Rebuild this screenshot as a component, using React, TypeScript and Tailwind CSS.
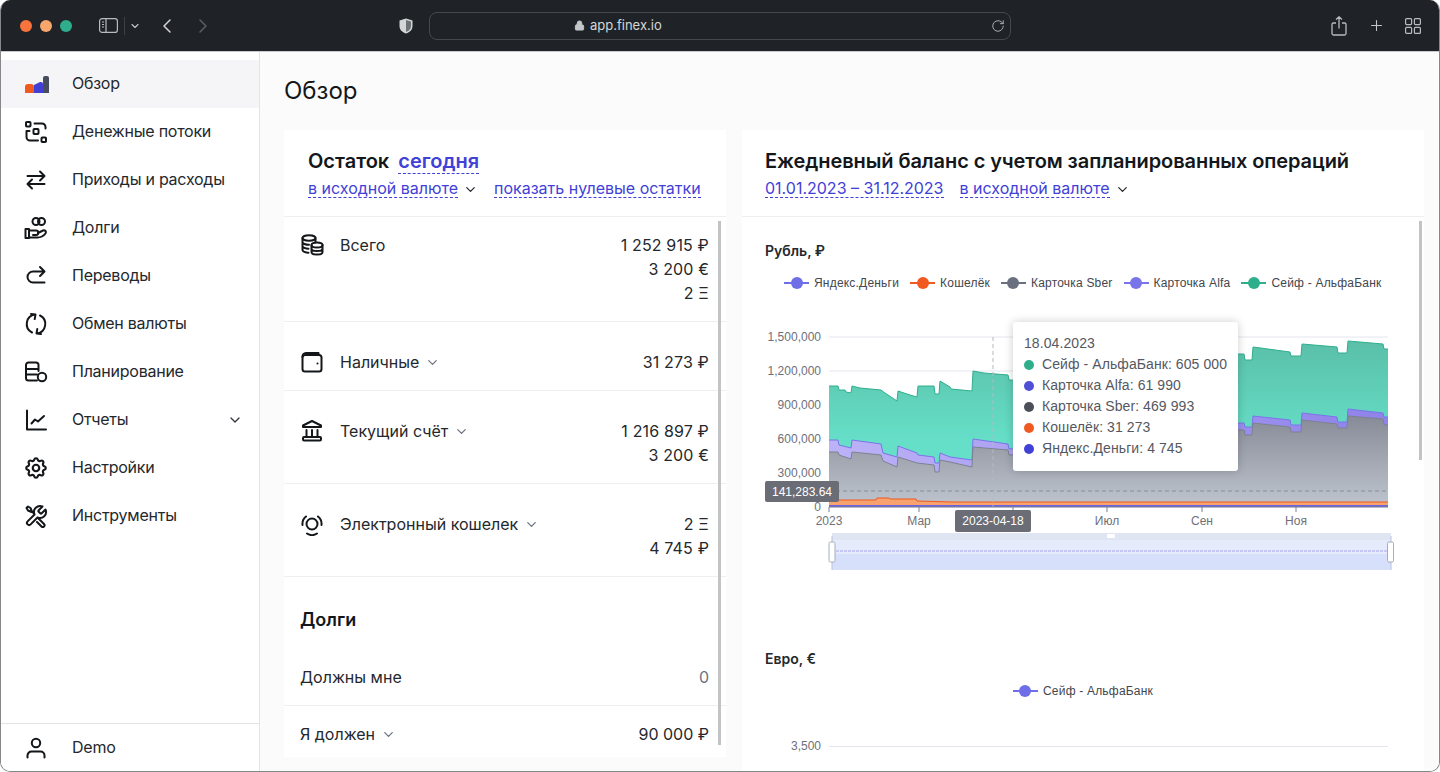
import { ChevronDown, ChevronLeft, ChevronRight, Lock, Plus, RotateCw } from 'lucide-react'
import { TbSettings } from 'react-icons/tb'
import type { ReactNode } from 'react'

const INK = '#14171a'

// иконки сайдбара, нарисованы по скриншоту
function Ico({ children, size = 24 }: { children: ReactNode; size?: number }) {
  return (
    <svg width={size} height={size} viewBox="0 0 24 24" fill="none" stroke={INK} strokeWidth="2" strokeLinecap="round" strokeLinejoin="round">
      {children}
    </svg>
  )
}

const LogoIcon = () => (
  <svg width="26" height="20" viewBox="0 0 26 20">
    <path d="M1 19v-6a3 3 0 0 1 3-3h3a3 3 0 0 1 3 3v6z" fill="#f0591f" />
    <path d="M10 19V11l4-2 2-1h1a2 2 0 0 1 2 2v9z" fill="#4240d4" />
    <path d="M19 19V4a2 2 0 0 1 2-2h2a2 2 0 0 1 2 2v15z" fill="#474d5c" />
  </svg>
)

const FlowsIcon = () => (
  <Ico>
    <rect x="2" y="2" width="4.500" height="4.500" rx="0.800" />
    <rect x="17.500" y="17.500" width="4.500" height="4.500" rx="0.800" />
    <rect x="9.500" y="9" width="5" height="5" rx="0.800" />
    <path d="M10.500 3.500H18a3.500 3.500 0 0 1 3.500 3.500v1.500M2.500 11h3M2.500 11v6a3.500 3.500 0 0 0 3.500 3.500h8" />
  </Ico>
)

const SwapIcon = () => (
  <Ico>
    <path d="M3.500 8h17M16 3.500L20.500 8 16 12.500" />
    <path d="M20.500 16h-17M8 11.500L3.500 16 8 20.500" />
  </Ico>
)

const DebtIcon = () => (
  <Ico>
    <circle cx="12" cy="5.500" r="3.500" />
    <circle cx="17.500" cy="5.500" r="3.500" />
    <path d="M1.500 13H5v9H1.500zM5 14.500h7a2.200 2.200 0 0 1 0 4.500H9" />
    <path d="M14 17l5-2.500a2 2 0 0 1 2.500 3c-2 2.500-4.500 4-8 4H5" />
  </Ico>
)

const TransferIcon = () => (
  <Ico>
    <path d="M20.500 7.500H9a5.500 5.500 0 0 0 0 11h11.500M16 3l4.500 4.500L16 12" />
  </Ico>
)

const ExchangeIcon = () => (
  <Ico>
    <path d="M8 20.500A9.500 9.500 0 0 1 11 2.600M7 2l4.500.6-.8 4.500" />
    <path d="M16 3.500A9.500 9.500 0 0 1 13 21.400M17 22l-4.500-.6.8-4.500" />
  </Ico>
)

const PlanIcon = () => (
  <Ico>
    <path d="M2 5a2.500 2.500 0 0 1 2.500-2.500H12A2.500 2.500 0 0 1 14.500 5v6M2 5v13a2.500 2.500 0 0 0 2.500 2.500H13M2 9h12.500M2 14.500h11" />
    <circle cx="18" cy="17" r="4.200" />
  </Ico>
)

const ReportIcon = () => (
  <Ico>
    <path d="M3 2.500V21.500H22M7.500 15.500l3.500-4 3 2 6-5.500" />
  </Ico>
)

const ToolsIcon = () => (
  <Ico>
    <path d="M14.700 6.300a1 1 0 0 0 0 1.400l1.600 1.600a1 1 0 0 0 1.400 0l3.770-3.770a6 6 0 0 1-7.940 7.940l-6.910 6.910a2.120 2.120 0 0 1-3-3l6.910-6.910a6 6 0 0 1 7.940-7.940l-3.760 3.760z" />
    <path d="M7.500 8L4 6.500 2.500 4 4 2.500 6.500 4 8 7.500l2 2M14.500 14.500l5.500 5.500a1.700 1.700 0 0 1-2.500 2.500L13 18" />
  </Ico>
)

const UserIcon = () => (
  <Ico>
    <circle cx="12" cy="7" r="4.200" />
    <path d="M3.500 21.500v-2a4 4 0 0 1 4-4h9a4 4 0 0 1 4 4v2" />
  </Ico>
)

const CoinsIcon = () => (
  <Ico>
    <ellipse cx="9" cy="5" rx="6.500" ry="2.800" />
    <path d="M2.500 5v12c0 1.500 2.900 2.800 6 2.800M2.500 9c0 1.500 2.900 2.800 6.500 2.800M2.500 13c0 1.500 2.900 2.800 6 2.800M15.500 5v4" />
    <ellipse cx="17" cy="12" rx="5.500" ry="2.500" />
    <path d="M11.500 12v7c0 1.500 2.500 2.500 5.500 2.500s5.500-1 5.500-2.500v-7M11.500 15.500c0 1.500 2.500 2.500 5.500 2.500s5.500-1 5.500-2.500" />
  </Ico>
)

const WalletIcon = () => (
  <Ico>
    <rect x="2.500" y="5" width="19" height="16.500" rx="2.500" />
    <path d="M2.500 7a3.500 3.500 0 0 1 3.500-4h12.500v2M17.500 13.500h.01" />
  </Ico>
)

const BankIcon = () => (
  <Ico>
    <path d="M12 2L3 6.500V8h18V6.500zM6.500 11v6M12 11v6M17.500 11v6" />
    <rect x="3" y="18" width="18" height="3.500" rx="1" />
  </Ico>
)

const EWalletIcon = () => (
  <Ico>
    <circle cx="12" cy="12" r="5.500" />
    <path d="M2.500 13a9.500 9.500 0 0 1 3.500-8.500M21.500 13a9.500 9.500 0 0 0-3.500-8.500M7 21.500a9 9 0 0 0 10 0" />
  </Ico>
)

const ShieldIcon = () => (
  <svg width="14" height="16" viewBox="0 0 14 16">
    <path d="M7 .5L13.500 2.500V8c0 3.800-2.600 6.200-6.500 7.500C3.100 14.200.5 11.800.5 8V2.500z" fill="#d4d6d8" />
    <path d="M7 2v12c3-1.100 5-3.100 5-6V3.500z" fill="#6d7276" />
  </svg>
)

const menu = [
  { label: 'Обзор', icon: <LogoIcon />, active: true },
  { label: 'Денежные потоки', icon: <FlowsIcon /> },
  { label: 'Приходы и расходы', icon: <SwapIcon /> },
  { label: 'Долги', icon: <DebtIcon /> },
  { label: 'Переводы', icon: <TransferIcon /> },
  { label: 'Обмен валюты', icon: <ExchangeIcon /> },
  { label: 'Планирование', icon: <PlanIcon /> },
  { label: 'Отчеты', icon: <ReportIcon />, arrow: true },
  { label: 'Настройки', icon: <TbSettings size={26} color={INK} className="-ml-[1px]" /> },
  { label: 'Инструменты', icon: <ToolsIcon /> },
]

function TitleBar() {
  return (
    <div className="flex h-[52px] shrink-0 items-center border-b border-[#c8cacc] bg-[#1f2327]">
      <div className="ml-[19px] flex gap-2">
        <span className="size-3 rounded-full bg-[#f9733c]" />
        <span className="size-3 rounded-full bg-[#f9a66c]" />
        <span className="size-3 rounded-full bg-[#2fae8c]" />
      </div>
      <svg className="ml-[27px]" width="19" height="15" viewBox="0 0 19 15" fill="none" stroke="#b9bcbe" strokeWidth="1.200">
        <rect x="0.600" y="0.600" width="17.800" height="13.800" rx="2.500" />
        <path d="M7 1v13M3 4h2M3 6.500h2M3 9h2" />
      </svg>
      <span className="ml-[6px] h-[18px] w-px bg-[#3c4145]" />
      <ChevronDown size={12} className="ml-[4px] text-[#c4c7c9]" strokeWidth={2.200} />
      <ChevronLeft size={24} className="ml-[14px] text-[#d2d4d6]" strokeWidth={1.500} />
      <ChevronRight size={24} className="ml-3 text-[#5a5f63]" strokeWidth={1.500} />
      <div className="ml-[184px] flex items-center">
        <ShieldIcon />
      </div>
      <div className="relative ml-4 flex h-7 w-[582px] items-center gap-[5px] rounded-lg border border-[#44494d] pl-[144px] text-[13px] text-[#d5d7d9]">
        <Lock size={11} fill="#c4c7c9" className="text-[#c4c7c9]" />
        <span>app.finex.io</span>
        <RotateCw size={14} className="absolute right-[5px] text-[#b9bcbe]" strokeWidth={1.500} />
      </div>
      <svg className="ml-[320px]" width="16" height="20" viewBox="0 0 16 20" fill="none" stroke="#b9bcbe" strokeWidth="1.300">
        <path d="M5 7H2.500A1.500 1.500 0 0 0 1 8.500v9A1.500 1.500 0 0 0 2.500 19h11a1.500 1.500 0 0 0 1.500-1.500v-9A1.500 1.500 0 0 0 13.500 7H11M8 12.500V1M5 3.500L8 .8l3 2.700" />
      </svg>
      <Plus size={17} className="ml-[21px] text-[#c4c7c9]" strokeWidth={1.500} />
      <svg className="ml-[20px]" width="16" height="16" viewBox="0 0 16 16" fill="none" stroke="#b9bcbe" strokeWidth="1.200">
        <rect x="0.600" y="0.600" width="6" height="6" rx="1" />
        <rect x="9.400" y="0.600" width="6" height="6" rx="1" />
        <rect x="0.600" y="9.400" width="6" height="6" rx="1" />
        <rect x="9.400" y="9.400" width="6" height="6" rx="1" />
      </svg>
    </div>
  )
}

function Sidebar() {
  return (
    <aside className="flex w-[259px] shrink-0 flex-col border-r border-[#e3e4e6] bg-white pt-2 text-[16px] tracking-[-0.25px] text-[#24282d]">
      {menu.map((item) => (
        <div key={item.label} className={`flex h-12 items-center ${item.active ? 'bg-[#f5f5f7]' : ''}`}>
          <span className="ml-[23px] flex w-[48px] items-center">{item.icon}</span>
          <span className="flex-1 pb-[2px]">{item.label}</span>
          {item.arrow && <ChevronDown size={16} className="mr-4 text-[#33383d]" />}
        </div>
      ))}
      <div className="mt-auto flex h-12 items-center border-t border-[#e3e4e6]">
        <span className="ml-[23px] flex w-[48px]"><UserIcon /></span>
        <span className="pb-[2px]">Demo</span>
      </div>
    </aside>
  )
}

function Link({ children, className = 'leading-[17px]' }: { children: ReactNode; className?: string }) {
  return <span className={`border-b border-dashed border-[#4141d8] text-[#4141d8] ${className}`}>{children}</span>
}

function Row({ icon, label, values, arrow, className = 'pt-7 pb-4' }: { icon: ReactNode; label: string; values: string[]; arrow?: boolean; className?: string }) {
  return (
    <div className={`flex justify-between border-b border-[#eeeff1] pl-4 pr-[17px] leading-6 ${className}`}>
      <div className="flex h-6 items-center">
        <span className="flex w-10 items-center">{icon}</span>
        <span>{label}</span>
        {arrow && <ChevronDown size={15} className="ml-[6px] text-[#6b7280]" />}
      </div>
      <div className="text-right tracking-[0.15px]">
        {values.map((v) => <div key={v}>{v}</div>)}
      </div>
    </div>
  )
}

function BalanceCard() {
  return (
    <section className="relative flex h-[627px] w-[442px] shrink-0 flex-col bg-white text-[16px] text-[#24282d]">
      <header className="h-[87px] shrink-0 border-b border-[#eeeff1] pl-6 pt-[18px]">
        <div className="flex h-[26px] items-center gap-[9px] text-[20px] font-semibold text-[#14171a]">
          <span>Остаток</span>
          <Link className="leading-[24px]">сегодня</Link>
        </div>
        <div className="mt-[6px] flex items-center">
          <Link>в исходной валюте</Link>
          <ChevronDown size={15} className="ml-[5px] text-[#24282d]" />
          <Link className="ml-4 leading-[17px]">показать нулевые остатки</Link>
        </div>
      </header>
      <Row className="pt-4 pb-4" icon={<CoinsIcon />} label="Всего" values={['1 252 915 ₽', '3 200 €', '2 Ξ']} />
      <Row icon={<WalletIcon />} label="Наличные" arrow values={['31 273 ₽']} />
      <Row icon={<BankIcon />} label="Текущий счёт" arrow values={['1 216 897 ₽', '3 200 €']} />
      <Row icon={<EWalletIcon />} label="Электронный кошелек" arrow values={['2 Ξ', '4 745 ₽']} />
      <h3 className="pl-4 pt-[30px] text-[18px] font-semibold leading-[26px] text-[#14171a]">Долги</h3>
      <div className="mt-[31px] flex h-[42px] justify-between border-b border-[#eeeff1] pl-4 pr-[17px] pt-[1px] leading-6">
        <span>Должны мне</span>
        <span className="text-[#6b7280]">0</span>
      </div>
      <div className="flex justify-between pl-4 pr-[17px] pt-4 leading-6">
        <span className="flex items-center">Я должен<ChevronDown size={15} className="ml-[6px] text-[#6b7280]" /></span>
        <span>90 000 ₽</span>
      </div>
      <div className="absolute left-[434px] top-[91px] h-[524px] w-[3px] bg-[#c2c3c5]" />
    </section>
  )
}

// точки ступенчатых линий, координаты совпадают с пикселями графика
const greenTop: [number, number][] = [
  [0, 49], [9, 49], [10, 53], [16, 53], [17, 55], [22, 56], [23, 49], [31, 51], [52, 53], [56, 56], [68, 64], [69, 54], [81, 58], [88, 60], [89, 49], [105, 49], [106, 57], [110, 57], [111, 44], [121, 50], [122, 52], [143, 54], [144, 34], [155, 36], [179, 38], [180, 43], [230, 44], [300, 34], [380, 24], [409, 17], [415, 17], [416, 23], [423, 23], [424, 10], [461, 15], [462, 19], [472, 19], [473, 7], [508, 10], [509, 16], [518, 16], [519, 4], [554, 7], [555, 12], [559, 12],
]
const purpleTop: [number, number][] = [
  [0, 103], [9, 103], [10, 108], [22, 111], [23, 103], [52, 107], [54, 116], [68, 120], [69, 109], [88, 116], [89, 118], [105, 120], [106, 126], [110, 126], [111, 116], [121, 120], [143, 123], [144, 102], [179, 107], [180, 112], [230, 108], [300, 100], [380, 92], [409, 86], [415, 86], [416, 90], [423, 90], [424, 79], [461, 83], [462, 88], [472, 88], [473, 76], [508, 80], [509, 85], [518, 85], [519, 72], [554, 76], [555, 80], [559, 80],
]
const grayTop: [number, number][] = [
  [0, 115], [9, 115], [10, 118], [22, 122], [23, 115], [52, 118], [54, 124], [68, 130], [69, 120], [88, 126], [105, 128], [106, 135], [110, 135], [111, 123], [121, 125], [143, 130], [144, 110], [179, 113], [180, 118], [230, 116], [300, 108], [380, 98], [409, 93], [415, 93], [416, 98], [423, 98], [424, 86], [461, 90], [462, 95], [472, 95], [473, 83], [508, 87], [509, 91], [518, 91], [519, 79], [554, 82], [555, 88], [559, 88],
]
const orangeTop: [number, number][] = [
  [0, 163], [47, 163], [48, 161], [60, 161], [61, 162], [87, 162], [88, 164], [125, 165], [559, 165],
]

const line = (pts: [number, number][]) => pts.map(([x, y]) => `${x},${y}`).join(' ')
const area = (pts: [number, number][], bottom = 170) => `0,${bottom} ${line(pts)} 559,${bottom}`

const legend = [
  { label: 'Яндекс.Деньги', color: '#6e6ee8' },
  { label: 'Кошелёк', color: '#f0591f' },
  { label: 'Карточка Sber', color: '#6b7080' },
  { label: 'Карточка Alfa', color: '#7a74ea' },
  { label: 'Сейф - АльфаБанк', color: '#2fae8c' },
]

const tooltipRows = [
  { label: 'Сейф - АльфаБанк: 605 000', color: 'bg-[#2fae8c]' },
  { label: 'Карточка Alfa: 61 990', color: 'bg-[#4f4fd8]' },
  { label: 'Карточка Sber: 469 993', color: 'bg-[#4b4f57]' },
  { label: 'Кошелёк: 31 273', color: 'bg-[#f0591f]' },
  { label: 'Яндекс.Деньги: 4 745', color: 'bg-[#4141d8]' },
]

function RubleChart() {
  const yTicks = [
    ['1,500,000', 0],
    ['1,200,000', 34],
    ['900,000', 68],
    ['600,000', 102],
    ['300,000', 136],
    ['0', 170],
  ] as const
  const xTicks = [['2023', 0], ['Мар', 90], ['Июл', 278], ['Сен', 373], ['Ноя', 467]] as const

  return (
    <div className="relative mt-[5px] h-[287px] w-[680px]">
      {/* начало координат графика: x=87, y=41 */}
      <svg width="680" height="287" viewBox="-87 -41 680 287" className="font-['Liberation_Sans']">
        <defs>
          <linearGradient id="fGreen" x1="0" y1="0" x2="0" y2="1">
            <stop offset="0" stopColor="#5abfa8" />
            <stop offset="0.600" stopColor="#66dfc8" />
          </linearGradient>
          <linearGradient id="fPurple" x1="0" y1="0" x2="1" y2="0">
            <stop offset="0" stopColor="#bcb2f7" />
            <stop offset="1" stopColor="#8f82ea" />
          </linearGradient>
          <linearGradient id="fGray" x1="0" y1="0" x2="0" y2="1">
            <stop offset="0" stopColor="#878b97" />
            <stop offset="1" stopColor="#bfc5cf" />
          </linearGradient>
        </defs>
        {yTicks.map(([, y]) => <line key={y} x1="0" x2="559" y1={y} y2={y} stroke="#e3e6ee" />)}
        <polygon points={area(greenTop)} fill="url(#fGreen)" />
        <polyline points={line(greenTop)} fill="none" stroke="#2fae8c" strokeWidth="1" />
        <polygon points={area(purpleTop)} fill="url(#fPurple)" />
        <polyline points={line(purpleTop)} fill="none" stroke="#7a74ea" strokeWidth="1" />
        <polygon points={area(grayTop)} fill="url(#fGray)" />
        <polyline points={line(grayTop)} fill="none" stroke="#7d8290" strokeWidth="1" />
        <polygon points={area(orangeTop)} fill="#f7a26f" />
        <polyline points={line(orangeTop)} fill="none" stroke="#f0591f" strokeWidth="1" />
        <rect x="0" y="168" width="559" height="2" fill="#6d63d9" />
        <line x1="0" x2="559" y1="154" y2="154" stroke="#8a8e98" strokeDasharray="4 3" />
        <line x1="164" x2="164" y1="0" y2="170" stroke="#b4b8c2" strokeDasharray="4 3" />
        <line x1="0" x2="559" y1="170" y2="170" stroke="#7c8296" />
        {[0, 90, 184, 278, 373, 467].map((x) => <line key={x} x1={x} x2={x} y1="170" y2="175" stroke="#7c8296" />)}
        {yTicks.map(([label, y]) => (
          <text key={label} x="-8" y={y + 4} textAnchor="end" fontSize="12" fill="#6e7079">{label}</text>
        ))}
        {xTicks.map(([label, x]) => (
          <text key={label} x={x} y="188" textAnchor="middle" fontSize="12" fill="#6e7079">{label}</text>
        ))}
        {/* подсказки осей */}
        <rect x="-64" y="144" width="74" height="21" rx="2" fill="#6a6d76" />
        <text x="-27" y="158.500" textAnchor="middle" fontSize="12" fill="#ffffff">141,283.64</text>
        <rect x="126" y="173" width="76" height="22" rx="2" fill="#6a6d76" />
        <text x="164" y="188" textAnchor="middle" fontSize="12" fill="#ffffff">2023-04-18</text>
        {/* бегунок масштаба */}
        <rect x="3" y="196" width="559" height="37" fill="#d6e0fb" />
        <rect x="3" y="196" width="559" height="7" fill="#dfe5f2" />
        <rect x="3" y="203" width="559" height="14" fill="#e5ebfa" />
        <line x1="3" x2="562" y1="214" y2="214" stroke="#a9a4f0" strokeDasharray="3 1" />
        <rect x="278" y="197" width="8" height="4" rx="1" fill="#ffffff" />
        <line x1="3" x2="3" y1="199" y2="233" stroke="#b9c2d8" />
        <line x1="562" x2="562" y1="199" y2="233" stroke="#b9c2d8" />
        <rect x="0" y="205" width="6" height="20" rx="1.500" fill="#ffffff" stroke="#a5acba" />
        <rect x="558.500" y="205" width="6" height="20" rx="1.500" fill="#ffffff" stroke="#a5acba" />
      </svg>
      <div className="absolute left-[271px] top-[26px] h-[149px] w-[225px] rounded-[3px] bg-white pl-[11px] pt-[11px] font-['Liberation_Sans'] text-[14px] leading-[21px] tracking-[0.08px] text-[#55585f] shadow-[0_0_10px_rgba(0,0,0,0.2)]">
        <div>18.04.2023</div>
        {tooltipRows.map((row) => (
          <div key={row.label} className="flex items-center gap-[8px]">
            <span className={`size-[10px] rounded-full ${row.color}`} />
            <span>{row.label}</span>
          </div>
        ))}
      </div>
    </div>
  )
}

function LegendItem({ label, color }: { label: string; color: string }) {
  return (
    <span className="flex items-center gap-[5px]">
      <span className="relative h-[14px] w-[25px]">
        <span className="absolute left-0 right-0 top-[6px] h-[2px]" style={{ backgroundColor: color }} />
        <span className="absolute left-[6.500px] top-[1px] size-[12px] rounded-full" style={{ backgroundColor: color }} />
      </span>
      {label}
    </span>
  )
}

function DailyCard() {
  return (
    <section className="relative flex h-[642px] flex-1 flex-col overflow-hidden bg-white text-[16px]">
      <header className="h-[87px] shrink-0 border-b border-[#eeeff1] pl-[23px] pt-[18px]">
        <div className="h-[26px] text-[20px] font-semibold leading-[26px] tracking-[-0.08px] text-[#14171a]">Ежедневный баланс с учетом запланированных операций</div>
        <div className="mt-[6px] flex items-center">
          <Link>01.01.2023 – 31.12.2023</Link>
          <Link className="ml-4 leading-[17px]">в исходной валюте</Link>
          <ChevronDown size={15} className="ml-[5px] text-[#24282d]" />
        </div>
      </header>
      <div className="pl-[23px] pt-[26px] text-[14px] font-semibold leading-4 text-[#24282d]">Рубль, ₽</div>
      <div className="mt-[16px] flex gap-[11px] pl-[42px] font-['Liberation_Sans'] text-[12px] leading-[16px] tracking-[0.2px] text-[#43464d]">
        {legend.map((l) => <LegendItem key={l.label} label={l.label} color={l.color} />)}
      </div>
      <RubleChart />
      <div className="pl-[23px] pt-[68px] text-[14px] font-semibold leading-4 text-[#24282d]">Евро, €</div>
      <div className="mt-[16px] flex justify-center font-['Liberation_Sans'] text-[12px] leading-[16px] tracking-[0.2px] text-[#43464d]">
        <LegendItem label="Сейф - АльфаБанк" color="#6e6ee8" />
      </div>
      <div className="mt-[38px] flex items-center pl-[22px] font-['Liberation_Sans'] text-[12px] text-[#6e7079]">
        <span className="w-[57px] text-right">3,500</span>
        <span className="ml-[8px] h-px w-[559px] bg-[#e3e6ee]" />
      </div>
      <div className="absolute left-[677px] top-[91px] h-[239px] w-[3px] bg-[#c2c3c5]" />
    </section>
  )
}

export default function App() {
  return (
    <div className="h-[772px] w-[1440px] overflow-hidden bg-white font-['Inter',sans-serif]">
      <div className="flex h-full flex-col overflow-hidden rounded-[10px] border-x border-b border-[#85888b]">
        <TitleBar />
        <div className="flex min-h-0 flex-1">
          <Sidebar />
          <main className="min-w-0 flex-1 overflow-hidden bg-[#fbfbfc] pl-6 pr-[15px]">
            <h1 className="pt-[23px] text-[24px] leading-8 text-[#14171a]">Обзор</h1>
            <div className="mt-[23px] flex gap-4">
              <BalanceCard />
              <DailyCard />
            </div>
          </main>
        </div>
      </div>
    </div>
  )
}
